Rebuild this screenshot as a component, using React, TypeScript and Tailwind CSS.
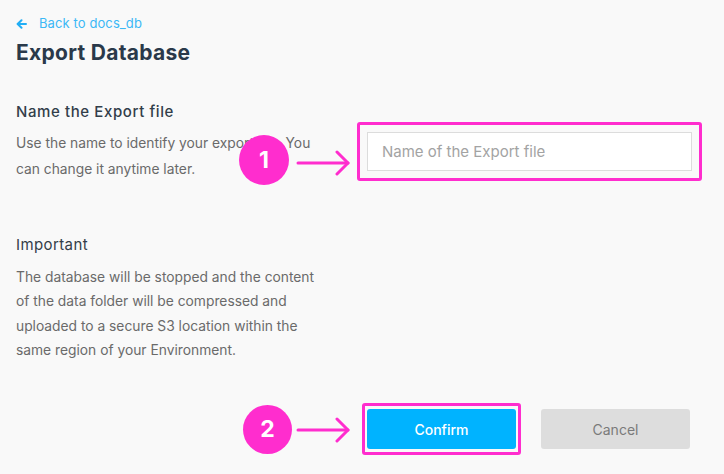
import React from "react";

const font = { fontFamily: "Inter, 'Noto Sans', sans-serif" };

function Arrow() {
  return (
    <svg width="56" height="26" viewBox="0 0 56 26" fill="none">
      <path d="M2 13 H52" stroke="#ff2dce" strokeWidth="3" strokeLinecap="round" />
      <path d="M41 2 L52 13 L41 24" stroke="#ff2dce" strokeWidth="3" strokeLinecap="round" strokeLinejoin="round" />
    </svg>
  );
}

export default function App() {
  return (
    <div
      className="relative w-[724px] h-[474px] overflow-hidden bg-[#f9f9f9] font-['Inter',_'Noto_Sans',_sans-serif]"
      style={font}
    >
      <div className="pl-4 pr-[22px] pt-4">
        <div className="flex h-4 items-center gap-[12px] text-[13px] tracking-[0.1px] text-[#3cb8f6]">
          <svg width="11" height="10" viewBox="0 0 11 10" fill="none">
            <path d="M10 5 H2 M5.5 1.2 L1.6 5 L5.5 8.8" stroke="#22aef5" strokeWidth="2" strokeLinecap="round" strokeLinejoin="round" />
          </svg>
          <span>Back to docs_db</span>
        </div>
        <h1 className="mt-[8px] text-[21px] leading-[26px] tracking-[0.3px] font-bold text-[#2a394a]">Export Database</h1>

        <div className="mt-[30px] flex justify-between">
          <div className="w-[300px]">
            <div className="text-[15px] leading-[32px] tracking-[0.6px] font-medium text-[#323e4a]">Name the Export file</div>
            <p className="mt-[2px] text-[13.8px] leading-[26px] text-[#6a6a6a]">
              Use the name to identify your export file. You
              <br />
              can change it anytime later.
            </p>
          </div>
          <div className="mt-[26px] h-[59px] w-[345px] rounded-[3px] border-[3px] border-[#ff2dce] p-[7px]">
            <input
              placeholder="Name of the Export file"
              className="h-[39px] w-full border border-[#dcdcdc] bg-white px-[14px] text-[15px] text-[#333] placeholder:text-[#a3a3a3] outline-none"
            />
          </div>
        </div>

        <div className="mt-[51px] text-[15px] leading-[24px] tracking-[0.4px] text-[#333d48]">Important</div>
        <p className="mt-2 text-[13.8px] leading-[24.3px] text-[#6a6a6a]">
          The database will be stopped and the content
          <br />
          of the data folder will be compressed and
          <br />
          uploaded to a secure S3 location within the
          <br />
          same region of your Environment.
        </p>

        <div className="mt-[41px] flex items-center justify-end gap-[20px] pr-[12px]">
          <div className="rounded-[3px] border-[3px] border-[#ff2dce] px-[2px] py-[3px]">
            <button className="h-10 w-[149px] rounded-[3px] bg-[#00b3ff] text-[14px] font-medium text-white">Confirm</button>
          </div>
          <button className="h-10 w-[149px] rounded-[3px] bg-[#dddddd] text-[14px] text-[#7a7a7a]">Cancel</button>
        </div>
      </div>

      <div className="absolute left-[239px] top-[135px] flex h-[50px] w-[50px] items-center justify-center rounded-full bg-[#ff2dce] text-[23px] font-bold text-white">1</div>
      <div className="absolute left-[296px] top-[150px]"><Arrow /></div>

      <div className="absolute left-[243px] top-[405px] flex h-[49px] w-[49px] items-center justify-center rounded-full bg-[#ff2dce] text-[23px] font-bold text-white">2</div>
      <div className="absolute left-[296px] top-[417px]"><Arrow /></div>
    </div>
  );
}
